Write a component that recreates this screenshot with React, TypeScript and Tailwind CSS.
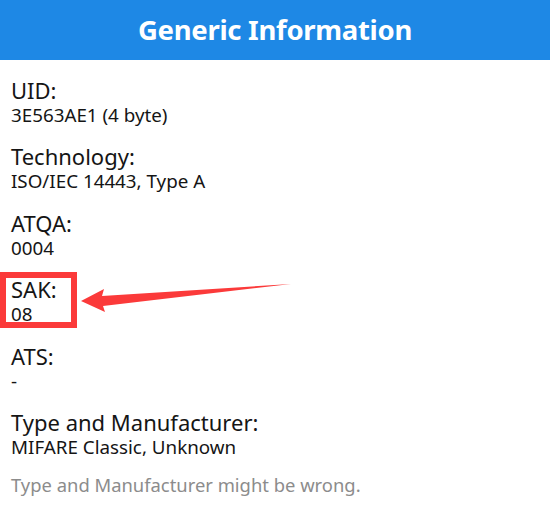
import React from "react";

const rows = [
  { label: "UID:", value: "3E563AE1 (4 byte)" },
  { label: "Technology:", value: "ISO/IEC 14443, Type A" },
  { label: "ATQA:", value: "0004" },
  { label: "SAK:", value: "08" },
  { label: "ATS:", value: "-" },
  { label: "Type and Manufacturer:", value: "MIFARE Classic, Unknown" },
];

export default function App() {
  return (
    <div
      className="relative w-[550px] h-[514px] bg-white overflow-hidden"
      style={{ fontFamily: '"Noto Sans", "Open Sans", sans-serif' }}
    >
      <div className="h-[60px] bg-[#1e88e5] flex items-center justify-center">
        <h1 className="text-white text-[27.5px] font-bold tracking-[-0.3px]">Generic Information</h1>
      </div>

      <div className="pl-[11px] pt-[17px] flex flex-col">
        {rows.map((r) => (
          <div key={r.label} className="h-[66.4px] text-[#151515]">
            <div className="text-[22px] leading-[26px]">{r.label}</div>
            <div className="text-[18.8px] leading-[24px]">{r.value}</div>
          </div>
        ))}
        <p className="text-[18.4px] leading-[27px] text-[#8c8c8c] -mt-[4px]">Type and Manufacturer might be wrong.</p>
      </div>

      {/* annotation */}
      <div className="absolute left-0 top-[272px] w-[77px] h-[56px] border-[6px] border-[#fb3a3a]" />
      <svg className="absolute left-0 top-0" width="550" height="514">
        <polygon points="81,301 104,289 102,296 291,284 103,306 105,312" fill="#fb3a3a" />
      </svg>
    </div>
  );
}
